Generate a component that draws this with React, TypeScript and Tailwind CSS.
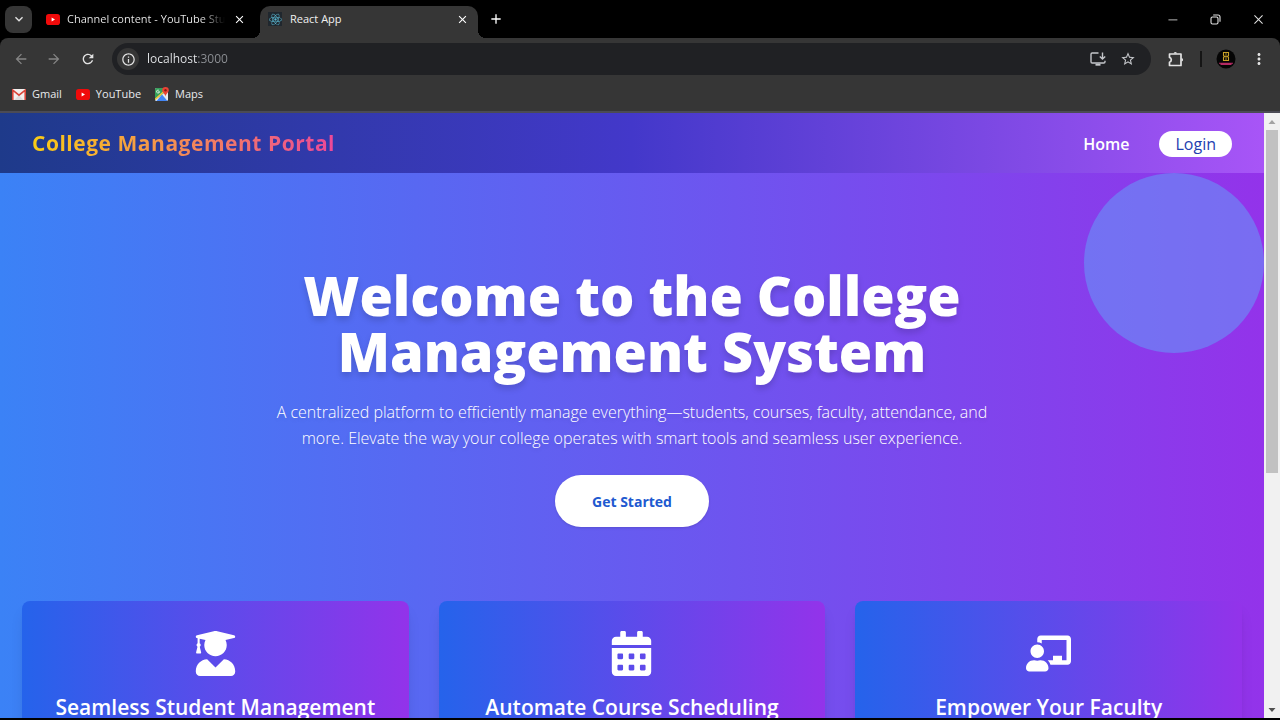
import { useState } from "react"
import type { ReactNode } from "react"
import { FaCalendarAlt, FaChalkboardTeacher, FaReact, FaUserGraduate } from "react-icons/fa"
import {
  MdAdd,
  MdArrowBack,
  MdArrowForward,
  MdClose,
  MdInfoOutline,
  MdKeyboardArrowDown,
  MdMoreVert,
  MdRefresh,
  MdStarBorder,
} from "react-icons/md"
import { VscChromeClose, VscChromeMinimize } from "react-icons/vsc"

const features = [
  { title: "Seamless Student Management", icon: FaUserGraduate },
  { title: "Automate Course Scheduling", icon: FaCalendarAlt },
  { title: "Empower Your Faculty", icon: FaChalkboardTeacher },
]

function YouTubeIcon() {
  return (
    <svg viewBox="0 0 14 11" className="w-[14px] shrink-0" aria-hidden="true">
      <rect width="14" height="11" rx="2.8" fill="#f00a0a" />
      <path d="M5.6 3.5v4l3.4-2z" fill="#fff" />
    </svg>
  )
}

function GmailIcon() {
  return (
    <svg viewBox="0 0 14 11" className="w-[14px] shrink-0" aria-hidden="true">
      <rect width="14" height="11" rx="1" fill="#f3efee" />
      <path d="M2.4 11 7 6l4.6 5z" fill="#dcdcdc" />
      <path d="M.8 11V1.2L7 6.2l6.2-5V11" fill="none" stroke="#d9453a" strokeWidth="1.6" />
    </svg>
  )
}

function MapsIcon() {
  return (
    <svg viewBox="0 0 14 14" className="w-[14px] shrink-0" aria-hidden="true">
      <rect y="1" width="13" height="13" rx="1.5" fill="#e8eaed" />
      <path d="M0 2.5A1.5 1.5 0 0 1 1.5 1H8l1 5-9 7z" fill="#34a05a" />
      <path d="M1.5 14 7 7.5l5.5 6.5z" fill="#4285f4" />
      <path d="M0 12.5 9 4.5" stroke="#f4c63d" strokeWidth="1.6" />
      <path d="M3.8 3.2a1.5 1.5 0 1 0 .8 1.5H3.3" fill="none" stroke="#fff" strokeWidth=".8" />
      <path d="M10.5 0A3.3 3.3 0 0 0 7.2 3.3c0 2.2 2.6 3 3.3 6.2.7-3.2 3.3-4 3.3-6.2A3.3 3.3 0 0 0 10.5 0z" fill="#ea4335" />
      <circle cx="10.5" cy="3.3" r="1.2" fill="#8c1d13" />
    </svg>
  )
}

function RestoreIcon() {
  return (
    <svg viewBox="0 0 13 13" className="h-[13px] w-[13px]" fill="none" stroke="currentColor" strokeWidth="1.1" aria-hidden="true">
      <rect x="2" y="4" width="7" height="7" rx="1.5" />
      <path d="M4.2 2H9a2 2 0 0 1 2 2v4.8" />
    </svg>
  )
}

function InstallIcon() {
  return (
    <svg viewBox="0 0 18 16" className="h-4 w-[18px]" fill="none" stroke="currentColor" strokeWidth="1.4" aria-hidden="true">
      <path d="M9.5 2H3.2A1.2 1.2 0 0 0 2 3.2v7.6A1.2 1.2 0 0 0 3.2 12h11.6a1.2 1.2 0 0 0 1.2-1.2v-1" />
      <path d="M13.5 1.5V8M10.8 5.4l2.7 2.7 2.7-2.7" />
      <path d="M6.5 13.7h5" strokeWidth="2" />
    </svg>
  )
}

function ExtensionIcon() {
  return (
    <svg viewBox="0 0 18 18" className="h-[18px] w-[18px]" fill="none" stroke="currentColor" strokeWidth="1.7" strokeLinejoin="round" aria-hidden="true">
      <path d="M2.5 4H14v11.5H2.5v-3.3a2.5 2.5 0 0 0 0-4.8z" />
      <path d="M6.6 3.6a1.7 1.7 0 0 1 3.4 0zM14.4 8.1a1.7 1.7 0 0 1 0 3.4z" fill="currentColor" stroke="none" />
    </svg>
  )
}

function ProfileIcon() {
  return (
    <svg viewBox="0 0 20 20" className="h-5 w-5" aria-hidden="true">
      <circle cx="10" cy="10" r="9.5" fill="#050505" />
      <path d="M7.5 3.5h5v3l-1 1 1 1v3h-5v-3l1-1-1-1z" fill="none" stroke="#c9a227" strokeWidth="1.1" />
      <path d="M10 4v7M8 7.5h4" stroke="#c9a227" strokeWidth=".8" />
      <path d="M3 14.2h14M4.5 15.4h11" stroke="#b52a63" strokeWidth="1.1" />
    </svg>
  )
}

function Bookmark({ icon, label }: { icon: ReactNode; label: string }) {
  return (
    <a href="#" className="flex items-center gap-1.5 text-[11px] font-medium text-[#e8eaed]">
      {icon}
      {label}
    </a>
  )
}

function TabStrip() {
  return (
    <div className="flex h-[38px] shrink-0 items-center bg-black text-[#e3e3e3]">
      <button aria-label="Search tabs" className="ml-[5px] grid h-[27px] w-[27px] place-items-center rounded-lg bg-[#363636]">
        <MdKeyboardArrowDown className="h-4 w-4" />
      </button>

      <div className="ml-[14px] flex w-[214px] items-center">
        <YouTubeIcon />
        <button className="ml-[7px] w-[158px] overflow-hidden bg-linear-to-r from-[#f0f0f0] from-85% to-transparent bg-clip-text text-left text-[11px] font-medium whitespace-nowrap text-transparent">
          Channel content - YouTube Studio
        </button>
        <button aria-label="Close tab" className="ml-2 text-white">
          <MdClose className="h-[13px] w-[13px]" />
        </button>
      </div>

      {/* Active tab */}
      <div className="relative flex h-8 w-[218px] items-center self-end rounded-t-[10px] bg-[#363636] pr-[9px] pb-1.5 pl-2">
        <span className="absolute bottom-0 -left-2 h-2 w-2 bg-[radial-gradient(circle_at_0_0,transparent_8px,#363636_8px)]" />
        <span className="absolute -right-2 bottom-0 h-2 w-2 bg-[radial-gradient(circle_at_100%_0,transparent_8px,#363636_8px)]" />
        <span className="grid h-[14px] w-[14px] place-items-center bg-[#20272e]">
          <FaReact className="h-[13px] w-[13px] text-[#58b4cd]" />
        </span>
        <button className="ml-2 flex-1 text-left text-[11px] font-medium text-[#f0f0f0]">React App</button>
        <button aria-label="Close tab" className="text-white">
          <MdClose className="h-[13px] w-[13px]" />
        </button>
      </div>

      <button aria-label="New tab" className="ml-[10px] text-white">
        <MdAdd className="h-4 w-4" />
      </button>

      <div className="mr-[15px] ml-auto flex items-center gap-[30px]">
        <button aria-label="Minimize">
          <VscChromeMinimize className="h-[13px] w-[13px]" />
        </button>
        <button aria-label="Restore">
          <RestoreIcon />
        </button>
        <button aria-label="Close window">
          <VscChromeClose className="h-[13px] w-[13px]" />
        </button>
      </div>
    </div>
  )
}

function Toolbar() {
  const [url, setUrl] = useState("localhost:3000")

  return (
    <div className="shrink-0 bg-black">
      <div className="h-[75px] rounded-t-lg border-b-2 border-[#4b4b55] bg-[#363636]">
        <div className="flex h-[42px] items-center text-[#e3e3e3]">
          <button aria-label="Back" className="ml-[13px] text-[#858585]">
            <MdArrowBack className="h-4 w-4" />
          </button>
          <button aria-label="Forward" className="ml-[17px] text-[#858585]">
            <MdArrowForward className="h-4 w-4" />
          </button>
          <button aria-label="Reload" className="ml-[18px]">
            <MdRefresh className="h-4 w-4" />
          </button>

          {/* Address bar */}
          <div className="ml-4 flex h-8 flex-1 items-center rounded-full bg-[#202124] pr-[15px] pl-[5px]">
            <button aria-label="Site information" className="grid h-[22px] w-[22px] place-items-center rounded-full bg-[#363636]">
              <MdInfoOutline className="h-[15px] w-[15px]" />
            </button>
            <input
              aria-label="Address"
              value={url}
              onChange={(e) => setUrl(e.target.value)}
              className="ml-2 flex-1 bg-[linear-gradient(to_right,#e8eaed_50px,#8e9196_50px)] bg-clip-text text-[12px] text-transparent caret-white outline-none"
            />
            <button aria-label="Install app" className="text-[#c4c6ca]">
              <InstallIcon />
            </button>
            <button aria-label="Bookmark this page" className="ml-[13px] text-[#c4c6ca]">
              <MdStarBorder className="h-4 w-4" />
            </button>
          </div>

          <button aria-label="Extensions" className="ml-4">
            <ExtensionIcon />
          </button>
          <span className="ml-[15px] h-4 w-[2px] bg-[#151515]" />
          <button aria-label="Profile" className="ml-[14px]">
            <ProfileIcon />
          </button>
          <button aria-label="Menu" className="mr-3 ml-[14px]">
            <MdMoreVert className="h-[18px] w-[18px]" />
          </button>
        </div>

        <div className="flex h-7 items-center gap-3.5 pl-3">
          <Bookmark icon={<GmailIcon />} label="Gmail" />
          <Bookmark icon={<YouTubeIcon />} label="YouTube" />
          <Bookmark icon={<MapsIcon />} label="Maps" />
        </div>
      </div>
    </div>
  )
}

function Navbar() {
  return (
    <nav className="flex h-[60px] items-center justify-between bg-linear-to-r/srgb from-[#1e3a8a] via-[#4338ca] to-[#a855f7] px-8 pt-[2px]">
      <h1 className="bg-linear-to-r/srgb from-[#facc15] to-[#ec4899] bg-clip-text text-[21px] font-bold tracking-wide text-transparent">
        College Management Portal
      </h1>
      <div className="flex items-center gap-[30px] text-[16px] leading-[26px]">
        <a href="#" className="font-semibold text-white">
          Home
        </a>
        <a href="#" className="rounded-full bg-white px-4 font-medium text-[#1e40af]">
          Login
        </a>
      </div>
    </nav>
  )
}

function Hero() {
  return (
    <section className="relative flex flex-col items-center pt-[94px] text-center text-white">
      <div className="absolute top-0 right-0 h-[180px] w-[180px] rounded-full bg-[#60a5fa]/50" />
      <h2 className="max-w-[720px] text-[54px] leading-[56px] font-extrabold text-shadow-[0_4px_6px_rgb(0_0_0/0.15)]">
        Welcome to the College Management System
      </h2>
      <p className="mt-5 max-w-[720px] text-[16px] leading-[26px] font-light text-shadow-[0_2px_4px_rgb(0_0_0/0.1)]">
        A centralized platform to efficiently manage everything—students, courses, faculty, attendance, and more.
        Elevate the way your college operates with smart tools and seamless user experience.
      </p>
      <button className="mt-6 h-[52px] rounded-full bg-white px-[37px] text-[14px] font-bold text-[#2059d0] shadow-sm">
        Get Started
      </button>
    </section>
  )
}

function Features() {
  return (
    <section className="mt-[74px] grid grid-cols-3 gap-[30px] px-[22px]">
      {features.map(({ title, icon: Icon }) => (
        <div
          key={title}
          className="flex min-h-[220px] flex-col items-center rounded-lg bg-linear-to-r/srgb from-[#2563eb] to-[#9333ea] pt-[30px] text-white shadow-lg"
        >
          <Icon className="h-[45px] w-[45px]" />
          <h3 className="mt-4 text-[21px] leading-[30px] font-semibold whitespace-nowrap">{title}</h3>
        </div>
      ))}
    </section>
  )
}

function Scrollbar() {
  return (
    <div className="flex w-4 shrink-0 flex-col items-center bg-[#f1f1f1]">
      <svg viewBox="0 0 16 17" className="h-[17px] w-4 shrink-0" aria-hidden="true">
        <path d="M8 7l3.5 4h-7z" fill="#a3a3a3" />
      </svg>
      <div className="min-h-0 w-full flex-1 px-[2px]">
        <div className="h-[60%] bg-[#c1c1c1]" />
      </div>
      <svg viewBox="0 0 16 17" className="h-[17px] w-4 shrink-0" aria-hidden="true">
        <path d="M8 11l3.5-4h-7z" fill="#505050" />
      </svg>
    </div>
  )
}

export default function App() {
  return (
    <div className="flex h-screen flex-col overflow-hidden bg-black pb-[2px] font-['Open_Sans','Noto_Sans',sans-serif]">
      <TabStrip />
      <Toolbar />
      <div className="flex min-h-0 flex-1">
        <main className="min-w-0 flex-1 overflow-hidden bg-linear-to-r/srgb from-[#3b82f6] to-[#9333ea]">
          <Navbar />
          <Hero />
          <Features />
        </main>
        <Scrollbar />
      </div>
    </div>
  )
}
